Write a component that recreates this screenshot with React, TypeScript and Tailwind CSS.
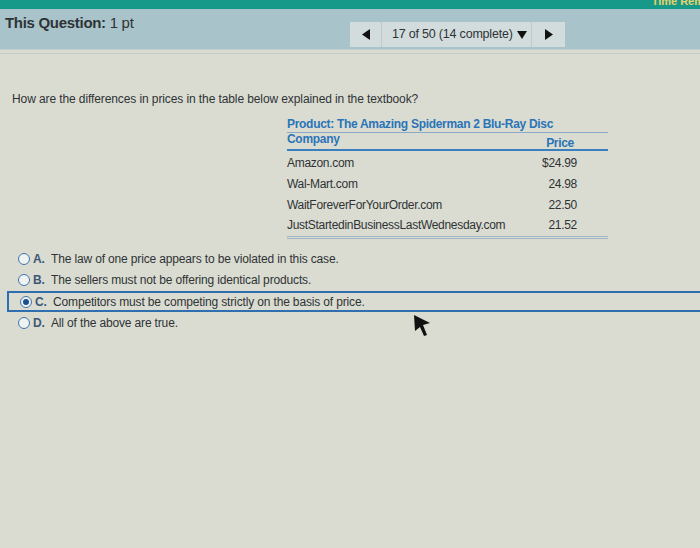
import React from "react";

const rows = [
  ["Amazon.com", "$24.99"],
  ["Wal-Mart.com", "24.98"],
  ["WaitForeverForYourOrder.com", "22.50"],
  ["JustStartedinBusinessLastWednesday.com", "21.52"],
];

const options = [
  ["A.", "The law of one price appears to be violated in this case."],
  ["B.", "The sellers must not be offering identical products."],
  ["C.", "Competitors must be competing strictly on the basis of price."],
  ["D.", "All of the above are true."],
];

function Radio({ checked }: { checked?: boolean }) {
  return (
    <span className="w-[12px] h-[12px] rounded-full border border-[#3f74ae] bg-[#eef2f0] flex items-center justify-center shrink-0">
      {checked && <span className="w-[6px] h-[6px] rounded-full bg-[#1d4f8f]" />}
    </span>
  );
}

export default function App() {
  return (
    <div
      className="w-[700px] h-[548px] overflow-hidden relative bg-[#dadcd1] text-[#2f3336]"
      style={{ fontFamily: '"Liberation Sans", Arial, sans-serif' }}
    >
      <div className="h-[9px] bg-[#17998a] relative">
        <span className="absolute right-[-4px] top-[-7px] text-[11px] font-bold text-[#e8d36a]">Time Rem</span>
      </div>
      <div className="h-[41px] bg-[#a9c3ca] flex items-start relative border-b border-[#c2cfd0]">
        <div className="pl-[5px] pt-[3px] text-[15px] tracking-[-0.3px]">
          <span className="font-bold">This Question:</span> 1 pt
        </div>
        <div className="absolute left-[350px] top-[13px] w-[215px] h-[25px] bg-[#d3dcdd] flex items-center text-[12.5px] tracking-[-0.2px]">
          <div className="w-[32px] flex justify-center border-r border-[#c0cacb] h-full items-center">
            <svg width="8" height="11" viewBox="0 0 8 11"><path d="M8 0 L0 5.5 L8 11 Z" fill="#111" /></svg>
          </div>
          <div className="pl-[10px] flex items-center gap-[4px] w-[150px] border-r border-[#c0cacb] h-full">
            <span>17 of 50 (14 complete)</span>
            <svg width="10" height="8" viewBox="0 0 10 8"><path d="M0 0 L10 0 L5 8 Z" fill="#111" /></svg>
          </div>
          <div className="flex-1 flex justify-center">
            <svg width="8" height="11" viewBox="0 0 8 11"><path d="M0 0 L8 5.5 L0 11 Z" fill="#111" /></svg>
          </div>
        </div>
      </div>
      <div className="h-[4px] border-b border-[#c9cbc2]" />
      <div className="pl-[12px] pt-[37px] text-[12px] leading-[16px] tracking-[-0.1px]">
        How are the differences in prices in the table below explained in the textbook?
      </div>
      <div className="ml-[287px] mt-[10px] w-[321px] text-[12px] tracking-[-0.3px]">
        <div className="font-bold text-[#2a74b8] leading-[14px] h-[15px]">Product: The Amazing Spiderman 2 Blu-Ray Disc</div>
        <div className="border-t border-[#8aa9c6] flex justify-between font-bold text-[#2a74b8] leading-[12px] h-[19px] border-b-2 border-b-[#3c7fbf]">
          <span className="pt-[0px]">Company</span>
          <span className="pr-[34px] pt-[4px]">Price</span>
        </div>
        <div className="pt-[2px] border-b-[3px] border-double border-[#9fb4c6]">
          {rows.map(([c, p]) => (
            <div key={c} className="flex justify-between h-[20.7px] items-center">
              <span>{c}</span>
              <span className="pr-[31px] w-[70px] text-right">{p}</span>
            </div>
          ))}
        </div>
      </div>
      <div className="mt-[9px] text-[12px] tracking-[-0.15px]">
        {options.map(([l, t], i) => {
          const sel = i === 2;
          return (
            <div
              key={l}
              className={
                "flex items-center h-[21.5px] " +
                (sel ? "ml-[7px] pl-[11px] border-y-2 border-l-2 border-[#2f6fb0]" : "pl-[18px]")
              }
            >
              <Radio checked={sel} />
              <span className="font-bold text-[#3d5877] ml-[3px] w-[18px]">{l}</span>
              <span>{t}</span>
            </div>
          );
        })}
      </div>
      <svg className="absolute left-[412px] top-[314px]" width="20" height="24" viewBox="0 0 20 24">
        <path d="M2 1 L18 9 L11 11 L15 21 L12 22 L8 13 L3 17 Z" fill="#111" />
      </svg>
    </div>
  );
}
